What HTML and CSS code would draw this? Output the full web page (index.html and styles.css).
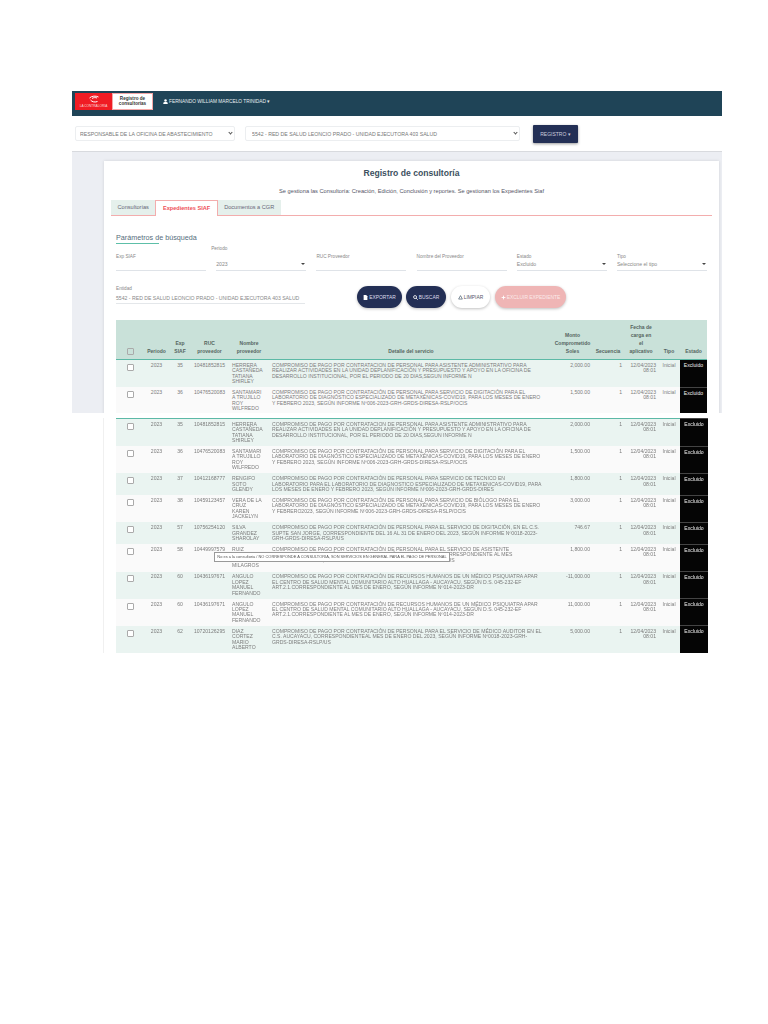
FILE: index.html
```html
<!DOCTYPE html>
<html lang="es">
<head>
  <meta charset="UTF-8">
  <meta name="viewport" content="width=device-width, initial-scale=1.0">
  <title>Registro de consultoría</title>
  <link rel="stylesheet" href="styles.css">
</head>
<body>
  <div class="sheet">
    <section class="shot-top">
      <header class="topbar">
        <div class="logo">
          <svg class="logo-mark" viewBox="0 0 16 9"><path d="M3.500 3C5.500 .8 10 .6 12.500 2M6 3.500C7.500 2.400 9.500 2.400 11 3M4.500 5C6 7 9 7.500 11.500 6.500" fill="none" stroke="#fff" stroke-width="1"/></svg>
          <span class="logo-text">LA CONTRALORÍA</span>
        </div>
        <div class="app-name">Registro de<br>consultorías</div>
        <div class="user">
          <svg class="user-icon" viewBox="0 0 8 8"><circle cx="4" cy="2.200" r="2" fill="#fff"/><path d="M.5 8V6.500C.5 5.300 2 4.800 4 4.800s3.500.5 3.500 1.700V8Z" fill="#fff"/></svg>
          FERNANDO WILLIAM MARCELO TRINIDAD ▾
        </div>
      </header>

      <div class="selectbar">
        <div class="select-wrap select-role"><select class="select"><option>RESPONSABLE DE LA OFICINA DE ABASTECIMIENTO</option></select></div>
        <div class="select-wrap select-unit"><select class="select"><option>5542 - RED DE SALUD LEONCIO PRADO - UNIDAD EJECUTORA 403 SALUD</option></select></div>
        <button class="btn-registro">REGISTRO ▾</button>
      </div>

      <div class="main">
        <div class="card">
          <h1>Registro de consultoría</h1>
          <p class="subtitle">Se gestiona las Consultoría: Creación, Edición, Conclusión y reportes. Se gestionan los Expedientes Siaf</p>

          <div class="tabs">
            <div class="tab">Consultorías</div>
            <div class="tab tab-active">Expedientes SIAF</div>
            <div class="tab">Documentos a CGR</div>
          </div>

          <h2>Parámetros de búsqueda</h2>

          <div class="filters">
            <div class="field"><span class="label">Exp SIAF</span></div>
            <div class="field field-raised"><span class="label">Periodo</span><span class="value">2023<i class="caret"></i></span></div>
            <div class="field"><span class="label">RUC Proveedor</span></div>
            <div class="field"><span class="label">Nombre del Proveedor</span></div>
            <div class="field field-filled"><span class="label">Estado</span><span class="value">Excluido<i class="caret"></i></span></div>
            <div class="field field-filled"><span class="label">Tipo</span><span class="value">Seleccione el tipo<i class="caret"></i></span></div>
          </div>

          <div class="actions">
            <div class="entidad">
              <span class="label">Entidad</span>
              <span class="value">5542 - RED DE SALUD LEONCIO PRADO - UNIDAD EJECUTORA 403 SALUD</span>
            </div>
            <button class="pill pill-dark pill-export">
              <svg viewBox="0 0 6 8"><path d="M0 0h4l2 2v6H0Z" fill="#fff"/></svg>EXPORTAR
            </button>
            <button class="pill pill-dark pill-search">
              <svg viewBox="0 0 8 8"><circle cx="3.300" cy="3.300" r="2.400" fill="none" stroke="#fff" stroke-width="1.300"/><path d="M5 5l2.500 2.500" stroke="#fff" stroke-width="1.400"/></svg>BUSCAR
            </button>
            <button class="pill pill-light pill-clear">
              <svg viewBox="0 0 8 8"><path d="M4 1 1 6.500h6Z" fill="none" stroke="#34495e" stroke-width="1"/></svg>LIMPIAR
            </button>
            <button class="pill pill-pink pill-exclude">
              <svg viewBox="0 0 8 8"><path d="M1 4h6M4 1v6" stroke="#fff" stroke-width="1.400"/></svg>EXCLUIR EXPEDIENTE
            </button>
          </div>

          <table class="grid">
            <colgroup>
              <col class="c-check"><col class="c-period"><col class="c-exp"><col class="c-ruc"><col class="c-name"><col class="c-detail"><col class="c-amount"><col class="c-seq"><col class="c-date"><col class="c-type"><col class="c-state">
            </colgroup>
            <thead>
              <tr>
                <th><i class="check check-head"></i></th>
                <th>Periodo</th>
                <th>Exp<br>SIAF</th>
                <th>RUC<br>proveedor</th>
                <th>Nombre<br>proveedor</th>
                <th>Detalle del servicio</th>
                <th>Monto<br>Comprometido<br>Soles</th>
                <th>Secuencia</th>
                <th>Fecha de<br>carga en<br>el<br>aplicativo</th>
                <th>Tipo</th>
                <th>Estado</th>
              </tr>
            </thead>
            <tbody>
              <tr>
                <td class="ctr"><i class="check"></i></td><td class="ctr">2023</td><td class="ctr">35</td><td class="ctr">10481852815</td>
                <td>HERRERA<br>CASTAÑEDA<br>TATIANA<br>SHIRLEY</td>
                <td>COMPROMISO DE PAGO POR CONTRATACION DE PERSONAL PARA ASISTENTE ADMINISTRATIVO PARA<br>REALIZAR ACTIVIDADES EN LA UNIDAD DEPLANIFICACIÓN Y PRESUPUESTO Y APOYO EN LA OFICINA DE<br>DESARROLLO INSTITUCIONAL, POR EL PERIODO DE 20 DIAS,SEGUN INFORME N</td>
                <td class="num">2,000.00</td><td class="num">1</td><td class="num">12/04/2023<br>08:01</td><td class="ctr">Inicial</td><td class="state">Excluido</td>
              </tr>
              <tr>
                <td class="ctr"><i class="check"></i></td><td class="ctr">2023</td><td class="ctr">36</td><td class="ctr">10476520083</td>
                <td>SANTAMARI<br>A TRUJILLO<br>ROY<br>WILFREDO</td>
                <td>COMPROMISO DE PAGO POR CONTRATACIÓN DE PERSONAL PARA SERVICIO DE DIGITACIÓN PARA EL<br>LABORATORIO DE DIAGNÓSTICO ESPECIALIZADO DE METAXÉNICAS-COVID19, PARA LOS MESES DE ENERO<br>Y FEBRERO 2023, SEGÚN INFORME Nº006-2023-GRH-GRDS-DIRESA-RSLP/OCIS</td>
                <td class="num">1,500.00</td><td class="num">1</td><td class="num">12/04/2023<br>08:01</td><td class="ctr">Inicial</td><td class="state">Excluido</td>
              </tr>
            </tbody>
          </table>
        </div>
      </div>
    </section>

    <section class="shot-bottom">
      <table class="grid grid-wide">
        <colgroup>
          <col class="c-check"><col class="c-period"><col class="c-exp"><col class="c-ruc"><col class="c-name"><col class="c-detail"><col class="c-amount"><col class="c-seq"><col class="c-date"><col class="c-type"><col class="c-state">
        </colgroup>
        <tbody>
          <tr>
            <td class="ctr"><i class="check"></i></td><td class="ctr">2023</td><td class="ctr">35</td><td class="ctr">10481852815</td>
            <td>HERRERA<br>CASTAÑEDA<br>TATIANA<br>SHIRLEY</td>
            <td>COMPROMISO DE PAGO POR CONTRATACION DE PERSONAL PARA ASISTENTE ADMINISTRATIVO PARA<br>REALIZAR ACTIVIDADES EN LA UNIDAD DEPLANIFICACIÓN Y PRESUPUESTO Y APOYO EN LA OFICINA DE<br>DESARROLLO INSTITUCIONAL, POR EL PERIODO DE 20 DIAS,SEGUN INFORME N</td>
            <td class="num">2,000.00</td><td class="num">1</td><td class="num">12/04/2023<br>08:01</td><td class="ctr">Inicial</td><td class="state">Excluido</td>
          </tr>
          <tr>
            <td class="ctr"><i class="check"></i></td><td class="ctr">2023</td><td class="ctr">36</td><td class="ctr">10476520083</td>
            <td>SANTAMARI<br>A TRUJILLO<br>ROY<br>WILFREDO</td>
            <td>COMPROMISO DE PAGO POR CONTRATACIÓN DE PERSONAL PARA SERVICIO DE DIGITACIÓN PARA EL<br>LABORATORIO DE DIAGNÓSTICO ESPECIALIZADO DE METAXÉNICAS-COVID19, PARA LOS MESES DE ENERO<br>Y FEBRERO 2023, SEGÚN INFORME Nº006-2023-GRH-GRDS-DIRESA-RSLP/OCIS</td>
            <td class="num">1,500.00</td><td class="num">1</td><td class="num">12/04/2023<br>08:01</td><td class="ctr">Inicial</td><td class="state">Excluido</td>
          </tr>
          <tr>
            <td class="ctr"><i class="check"></i></td><td class="ctr">2023</td><td class="ctr">37</td><td class="ctr">10412168777</td>
            <td>RENGIFO<br>SOTO<br>GLENDY</td>
            <td>COMPROMISO DE PAGO POR CONTRATACIÓN DE PERSONAL PARA SERVICIO DE TECNICO EN<br>LABORATORIO PARA EL LABORATORIO DE DIAGNOSTICO ESPECIALIZADO DE METAXENICAS-COVID19, PARA<br>LOS MESES DE ENERO Y FEBRERO 2023, SEGÚN INFORME Nº006-2023-GRH-GRDS-DIRES</td>
            <td class="num">1,800.00</td><td class="num">1</td><td class="num">12/04/2023<br>08:01</td><td class="ctr">Inicial</td><td class="state">Excluido</td>
          </tr>
          <tr>
            <td class="ctr"><i class="check"></i></td><td class="ctr">2023</td><td class="ctr">38</td><td class="ctr">10459123457</td>
            <td>VERA DE LA<br>CRUZ<br>KAREN<br>JACKELYN</td>
            <td>COMPROMISO DE PAGO POR CONTRATACIÓN DE PERSONAL PARA SERVICIO DE BIÓLOGO PARA EL<br>LABORATORIO DE DIAGNÓSTICO ESPECIALIZADO DE METAXÉNICAS-COVID19, PARA LOS MESES DE ENERO<br>Y FEBRERO2023, SEGÚN INFORME Nº006-2023-GRH-GRDS-DIRESA-RSLP/OCIS</td>
            <td class="num">3,000.00</td><td class="num">1</td><td class="num">12/04/2023<br>08:01</td><td class="ctr">Inicial</td><td class="state">Excluido</td>
          </tr>
          <tr>
            <td class="ctr"><i class="check"></i></td><td class="ctr">2023</td><td class="ctr">57</td><td class="ctr">10756254120</td>
            <td>SILVA<br>GRANDEZ<br>SHAROLAY</td>
            <td>COMPROMISO DE PAGO POR CONTRATACIÓN DE PERSONAL PARA EL SERVICIO DE DIGITACIÓN, EN EL C.S.<br>SUPTE SAN JORGE, CORRESPONDIENTE DEL 16 AL 31 DE ENERO DEL 2023, SEGÚN INFORME Nº0018-2023-<br>GRH-GRDS-DIRESA-RSLP/US</td>
            <td class="num">746.67</td><td class="num">1</td><td class="num">12/04/2023<br>08:01</td><td class="ctr">Inicial</td><td class="state">Excluido</td>
          </tr>
          <tr>
            <td class="ctr"><i class="check"></i></td><td class="ctr">2023</td><td class="ctr">58</td><td class="ctr">10449997579</td>
            <td>RUIZ<br>&nbsp;<br>&nbsp;<br>MILAGROS</td>
            <td>COMPROMISO DE PAGO POR CONTRATACIÓN DE PERSONAL PARA EL SERVICIO DE ASISTENTE<br>ADMINISTRATIVO EN EL ÁREA DE ADMINISTRACIÓN DE RECURSOS, CORRESPONDIENTE AL MES<br>DE ENERO DEL 2023, SEGÚN INFORME Nº18-GRH-GRDS-DIRESA-RSLP/US</td>
            <td class="num">1,800.00</td><td class="num">1</td><td class="num">12/04/2023<br>08:01</td><td class="ctr">Inicial</td><td class="state">Excluido</td>
          </tr>
          <tr>
            <td class="ctr"><i class="check"></i></td><td class="ctr">2023</td><td class="ctr">60</td><td class="ctr">10436197671</td>
            <td>ANGULO<br>LOPEZ<br>MANUEL<br>FERNANDO</td>
            <td>COMPROMISO DE PAGO POR CONTRATACIÓN DE RECURSOS HUMANOS DE UN MÉDICO PSIQUIATRA APAR<br>EL CENTRO DE SALUD MENTAL COMUNITARIO ALTO HUALLAGA - AUCAYACU, SEGÚN D.S. 045-232-EF<br>ART.2.1.CORRESPONDIENTE AL MES DE ENERO, SEGÚN INFORME Nº014-2023-DR</td>
            <td class="num">-11,000.00</td><td class="num">1</td><td class="num">12/04/2023<br>08:01</td><td class="ctr">Inicial</td><td class="state">Excluido</td>
          </tr>
          <tr>
            <td class="ctr"><i class="check"></i></td><td class="ctr">2023</td><td class="ctr">60</td><td class="ctr">10436197671</td>
            <td>ANGULO<br>LOPEZ<br>MANUEL<br>FERNANDO</td>
            <td>COMPROMISO DE PAGO POR CONTRATACIÓN DE RECURSOS HUMANOS DE UN MÉDICO PSIQUIATRA APAR<br>EL CENTRO DE SALUD MENTAL COMUNITARIO ALTO HUALLAGA - AUCAYACU, SEGÚN D.S. 045-232-EF<br>ART.2.1.CORRESPONDIENTE AL MES DE ENERO, SEGÚN INFORME Nº014-2023-DR</td>
            <td class="num">11,000.00</td><td class="num">1</td><td class="num">12/04/2023<br>08:01</td><td class="ctr">Inicial</td><td class="state">Excluido</td>
          </tr>
          <tr>
            <td class="ctr"><i class="check"></i></td><td class="ctr">2023</td><td class="ctr">62</td><td class="ctr">10720126295</td>
            <td>DIAZ<br>CORTEZ<br>MARIO<br>ALBERTO</td>
            <td>COMPROMISO DE PAGO POR CONTRATACIÓN DE PERSONAL PARA EL SERVICIO DE MÉDICO AUDITOR EN EL<br>C.S. AUCAYACU, CORRESPONDIENTEAL MES DE ENERO DEL 2023, SEGÚN INFORME Nº0018-2023-GRH-<br>GRDS-DIRESA-RSLP/US</td>
            <td class="num">5,000.00</td><td class="num">1</td><td class="num">12/04/2023<br>08:01</td><td class="ctr">Inicial</td><td class="state">Excluido</td>
          </tr>
        </tbody>
      </table>
      <div class="tooltip">No es a la consultoria / NO CORRESPONDE A CONSULTORIA, SON SERVICIOS EN GENERAL PARA EL PAGO DE PERSONAL</div>
    </section>
  </div>
</body>
</html>
```

FILE: styles.css
```css
body {
  margin: 0;
  background-color: #fff;
  font-family: "Liberation Sans", Arial, sans-serif;
  color: #666;
}
.sheet {
  position: relative;
  width: 650px;
  margin: 91px 0 0 72px;
  filter: blur(0.4px);
}

/* upper screenshot */
.shot-top {
  height: 322px;
  overflow: hidden;
  background-color: #eceef3;
}
.topbar {
  display: flex;
  align-items: center;
  height: 25px;
  box-sizing: border-box;
  padding: 0 0 5px 3px;
  background-color: #1f4457;
}
.logo {
  display: flex;
  flex-direction: column;
  align-items: center;
  justify-content: center;
  width: 37px;
  height: 17px;
  background-color: #f01c24;
}
.logo-mark {
  width: 16px;
  height: 9px;
}
.logo-text {
  font-size: 3.200px;
  line-height: 4px;
  color: #fbdcdc;
  white-space: nowrap;
}
.app-name {
  width: 41px;
  height: 17px;
  box-sizing: border-box;
  padding-top: 2.500px;
  border: 1px solid #f4a7a7;
  background-color: #fff;
  font-size: 4.600px;
  line-height: 5.400px;
  font-weight: bold;
  text-align: center;
  color: #333;
}
.user {
  display: flex;
  align-items: center;
  margin-left: 10px;
  font-size: 4.800px;
  color: #e8eef0;
  white-space: nowrap;
}
.user-icon {
  width: 5px;
  height: 5px;
  margin-right: 1px;
}
.selectbar {
  display: flex;
  align-items: center;
  height: 36px;
  padding-left: 3px;
  background-color: #fff;
  border-bottom: 1px solid #d8dade;
  box-sizing: border-box;
}
.select-wrap {
  position: relative;
  height: 15px;
}
.select-wrap::after {
  content: "";
  position: absolute;
  right: 3px;
  top: 5px;
  width: 2px;
  height: 2px;
  border-right: 1px solid #555;
  border-bottom: 1px solid #555;
  transform: rotate(45deg);
}
.select {
  display: block;
  width: 100%;
  height: 100%;
  box-sizing: border-box;
  padding: 0 0 0 4px;
  border: 1px solid #eceef0;
  border-radius: 2px;
  background-color: #fff;
  appearance: none;
  font-family: inherit;
  font-size: 5.200px;
  color: #777;
}
.select-role {
  width: 160px;
}
.select-unit {
  width: 275px;
  margin-left: 10px;
}
.select-unit .select {
  padding-left: 6px;
}
.btn-registro {
  width: 45px;
  height: 18px;
  margin-left: 13px;
  padding: 0;
  border: none;
  border-radius: 1px;
  background-color: #232f55;
  box-shadow: 0 1px 3px rgba(0, 0, 0, 0.4);
  font-family: inherit;
  font-size: 5px;
  color: #ccd;
}
.main {
  padding: 9px 3px 0 32px;
}
.card {
  height: 300px;
  padding-left: 12px;
  background-color: #fff;
  box-shadow: 0 0 3px rgba(0, 0, 0, 0.12);
}
h1 {
  margin: 0 0 0 -12px;
  padding-top: 7px;
  font-size: 8.600px;
  line-height: 11px;
  text-align: center;
  color: #3c5060;
}
.subtitle {
  margin: 8px 0 0 -12px;
  font-size: 5.700px;
  line-height: 9px;
  text-align: center;
  color: #556;
}
.tabs {
  display: flex;
  width: 601px;
  height: 16px;
  box-sizing: border-box;
  margin: 4px 0 0 -5px;
  border-bottom: 1px solid #f3adad;
}
.tab {
  height: 15px;
  padding: 0 6.500px;
  background-color: #e5f0ec;
  font-size: 5.600px;
  line-height: 15px;
  color: #667;
}
.tab-active {
  height: 16px;
  box-sizing: border-box;
  border: 1px solid #f3adad;
  border-bottom: none;
  background-color: #fff;
  font-weight: bold;
  line-height: 14px;
  color: #ee4f58;
}
h2 {
  position: relative;
  width: fit-content;
  margin: 17px 0 0;
  font-size: 7.200px;
  line-height: 10px;
  font-weight: normal;
  color: #566d7c;
}
h2::after {
  content: "";
  position: absolute;
  left: 0;
  bottom: -1px;
  width: 43px;
  height: 1px;
  background-color: #5dbfa8;
}
.filters {
  display: grid;
  grid-template-columns: repeat(6, 90px);
  column-gap: 10.200px;
  margin-top: 1px;
}
.field {
  display: flex;
  flex-direction: column;
  height: 27px;
  box-sizing: border-box;
  border-bottom: 1px solid #dfe3e8;
}
.label {
  margin-top: 10px;
  font-size: 4.700px;
  line-height: 6px;
  color: #888;
}
.value {
  position: relative;
  font-size: 5.150px;
  line-height: 6px;
  color: #888;
}
.field-raised .label {
  margin: 2px 0 0 -5px;
}
.field-raised .value {
  margin-top: 9px;
}
.field-filled .value {
  margin-top: 1px;
}
.caret {
  position: absolute;
  right: 1px;
  top: 2px;
  border-left: 2px solid transparent;
  border-right: 2px solid transparent;
  border-top: 2px solid #444;
}
.actions {
  display: flex;
  align-items: flex-start;
  margin-top: 14px;
}
.entidad {
  display: flex;
  flex-direction: column;
  width: 189px;
  height: 19px;
  box-sizing: border-box;
  border-bottom: 1px solid #e4e7ea;
}
.entidad .label {
  margin-top: 1px;
}
.entidad .value {
  margin-top: 3px;
  white-space: nowrap;
}
.pill {
  display: flex;
  align-items: center;
  justify-content: center;
  height: 22px;
  margin-top: 1px;
  padding: 0;
  border: none;
  border-radius: 11px;
  box-shadow: 0 1px 3px rgba(0, 0, 0, 0.25);
  font-family: inherit;
  font-size: 4.900px;
  white-space: nowrap;
}
.pill svg {
  width: 5px;
  height: 5px;
  margin-right: 1px;
}
.pill-dark {
  background-color: #232f55;
  color: #dde;
}
.pill-light {
  background-color: #fff;
  color: #556;
}
.pill-pink {
  background-color: #efb5b5;
  color: #fbeaea;
}
.pill-export {
  width: 45px;
  margin-left: 52px;
}
.pill-search {
  width: 40px;
  margin-left: 4px;
}
.pill-clear {
  width: 39px;
  margin-left: 5px;
}
.pill-exclude {
  width: 71px;
  margin-left: 5px;
}

/* table */
.grid {
  width: 591px;
  margin-top: 12px;
  border-collapse: collapse;
  table-layout: fixed;
  font-size: 5.100px;
  line-height: 5.400px;
}
.c-check { width: 27px; }
.c-period { width: 27px; }
.c-exp { width: 20px; }
.c-ruc { width: 39px; }
.c-name { width: 40px; }
.c-detail { width: 284px; }
.c-amount { width: 39px; }
.c-seq { width: 32px; }
.c-date { width: 34px; }
.c-type { width: 22px; }
.c-state { width: 27px; }
.grid th {
  height: 35px;
  padding: 0 0 4px;
  vertical-align: bottom;
  background-color: #c9e1d9;
  border-bottom: 1px solid #5cb9a6;
  font-size: 5px;
  line-height: 8px;
  text-align: center;
  color: #55655f;
}
.grid td {
  padding: 2.800px 2px 2.800px 3px;
  vertical-align: top;
  color: #7c7c7c;
  white-space: nowrap;
  overflow: hidden;
}
.grid tbody tr:nth-child(odd) {
  background-color: #eaf4f1;
}
.grid tbody tr:nth-child(even) {
  background-color: #fafafa;
}
.grid .ctr {
  padding-left: 0;
  padding-right: 0;
  text-align: center;
}
.grid .num {
  padding-left: 0;
  text-align: right;
}
.grid .state {
  padding: 2.800px 0 0;
  background-color: #050505;
  border-top: 1px solid #444;
  text-align: center;
  color: #f2f2f2;
}
.check {
  display: block;
  width: 5px;
  height: 5px;
  margin: 1px 0 0 11px;
  border: 1px solid #aaa;
  border-radius: 1px;
  background-color: #fff;
}
.check-head {
  background-color: #c9e1d9;
}

/* lower screenshot */
.shot-bottom {
  position: relative;
  margin: 5px 0 0 31px;
  padding-left: 12px;
  border-left: 1px solid #f0f0f0;
}
.grid-wide {
  width: 592px;
  margin-top: 0;
  border-top: 1px solid #5cb9a6;
}
.grid-wide .c-state {
  width: 28px;
}
.tooltip {
  position: absolute;
  left: 110px;
  top: 134px;
  width: 236px;
  height: 10px;
  box-sizing: border-box;
  border: 1px solid #999;
  background-color: #fff;
  font-size: 3.950px;
  line-height: 8px;
  text-align: center;
  color: #555;
  white-space: nowrap;
  overflow: hidden;
}
```
